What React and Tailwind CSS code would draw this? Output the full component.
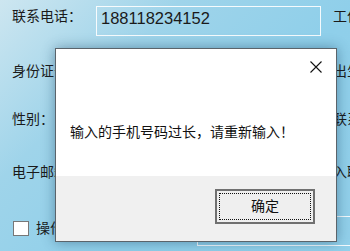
import React from "react";

const font = { fontFamily: '"Liberation Sans", "Noto Sans CJK SC", sans-serif' };

function CloseIcon() {
  return (
    <svg width="12" height="12" viewBox="0 0 12 12" className="block">
      <path d="M0.5 0.5 L11.5 11.5 M11.5 0.5 L0.5 11.5" stroke="#111" strokeWidth="1.1" />
    </svg>
  );
}

function MessageDialog() {
  return (
    <div className="absolute left-[55px] top-[48px] w-[282px] h-[194px] flex flex-col border border-[#5b646b] bg-white shadow-[0_0_12px_rgba(20,60,90,0.45)]">
      <div className="h-[127px] bg-white flex flex-col">
        <div className="flex justify-end pt-[12px] pr-[14px]">
          <CloseIcon />
        </div>
        <div className="mt-[49px] pl-[14px] text-[14px] leading-[20px] text-[#111]">
          输入的手机号码过长，请重新输入！
        </div>
      </div>
      <div className="flex-1 bg-[#f0f0f0] flex justify-end items-start pt-[13px] pr-[21px]">
        <button className="w-[100px] h-[35px] border-2 border-[#707070] bg-[#efefef] p-[2px] flex">
          <span className="flex-1 border border-dotted border-[#111] flex items-center justify-center text-[14px] text-[#111]">
            确定
          </span>
        </button>
      </div>
    </div>
  );
}

export default function App() {
  return (
    <div
      className="relative w-[350px] h-[251px] overflow-hidden text-[#1a1a1a] bg-[linear-gradient(135deg,#cde6f0_0%,#9fd4ea_30%,#8fcfea_60%,#92d0ea_100%)]"
      style={font}
    >
      <div className="flex flex-col pt-[6px] text-[14px]">
        <div className="flex items-start h-[30px]">
          <div className="w-[96px] shrink-0 pl-[12px] pt-[1px] leading-[18px] whitespace-nowrap">联系电话：</div>
          <div className="w-[225px] shrink-0 h-[30px] border border-white/90 pl-[4px] pt-[1px] text-[16.5px] leading-[20px]">
            188118234152
          </div>
          <div className="ml-[12px] pt-[1px] leading-[18px] whitespace-nowrap">工作单位：</div>
        </div>

        <div className="flex items-center h-[18px] mt-[26px]">
          <div className="w-[333px] shrink-0 pl-[12px] whitespace-nowrap">身份证号：</div>
          <div className="whitespace-nowrap">出生日期：</div>
        </div>

        <div className="flex items-center h-[18px] mt-[30px]">
          <div className="w-[333px] shrink-0 pl-[12px] whitespace-nowrap">性别：</div>
          <div className="whitespace-nowrap">联系地址：</div>
        </div>

        <div className="flex items-center h-[18px] mt-[35px]">
          <div className="w-[333px] shrink-0 pl-[12px] whitespace-nowrap">电子邮箱：</div>
          <div className="whitespace-nowrap">入职日期：</div>
        </div>

        <div className="flex items-start mt-[35px]">
          <div className="w-[197px] shrink-0 flex items-center pl-[13px] pt-[2px]">
            <div className="w-[16px] h-[15px] border border-[#777] bg-white" />
            <span className="ml-[7px] whitespace-nowrap">操作员</span>
          </div>
          <div className="w-[160px] shrink-0 h-[30px] border border-white/90" />
        </div>
      </div>

      <MessageDialog />
    </div>
  );
}
